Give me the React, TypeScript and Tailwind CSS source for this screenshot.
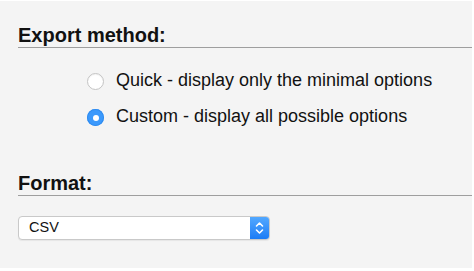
import React from "react";

const FONT = { fontFamily: '"Liberation Sans", Arial, Helvetica, sans-serif' };

function Radio({ checked }: { checked?: boolean }) {
  if (checked) {
    return (
      <span className="mt-[5px] flex h-[17px] w-[17px] shrink-0 items-center justify-center rounded-full bg-[#3b99fc] shadow-[inset_0_0_0_1px_#2f8cf0]">
        <span className="h-[6px] w-[6px] rounded-full bg-white" />
      </span>
    );
  }
  return (
    <span className="mt-[5px] h-[17px] w-[17px] shrink-0 rounded-full border border-[#c4c4c4] bg-white shadow-[inset_0_1px_1px_rgba(0,0,0,0.05)]" />
  );
}

export default function App() {
  return (
    <div className="h-[271px] w-[474px] bg-white pt-[1px] pb-[3px] pr-[2px]" style={FONT}>
      <div className="h-full w-full bg-[#f4f4f4] pl-[18px] pt-[22px] text-[#111]">
        {/* EXPORT METHOD */}
        <h2 className="border-b-[1.5px] border-[#9e9e9e] text-[20px] font-bold leading-[24px]">
          Export method:
        </h2>

        <div className="mt-[20px] flex flex-col gap-[12px] pl-[69px]">
          <label className="flex items-start gap-[12px] text-[18px] leading-[24px]">
            <Radio />
            Quick - display only the minimal options
          </label>
          <label className="flex items-start gap-[12px] text-[18px] leading-[24px]">
            <Radio checked />
            Custom - display all possible options
          </label>
        </div>

        {/* FORMAT */}
        <h2 className="mt-[43px] border-b-[1.5px] border-[#9e9e9e] text-[20px] font-bold leading-[24px]">
          Format:
        </h2>

        <div className="mt-[20px] flex h-[24px] w-[252px] overflow-hidden rounded-[4px] border border-[#c9c9c9] bg-white shadow-[0_1px_1px_rgba(0,0,0,0.06)]">
          <div className="flex flex-1 items-center pl-[10px] text-[14.5px]">CSV</div>
          <div className="flex w-[19px] items-center justify-center bg-gradient-to-b from-[#52a8ff] to-[#1a7cf5]">
            <svg width="9" height="14" viewBox="0 0 9 14" fill="none" stroke="white" strokeWidth="1.6" strokeLinecap="round" strokeLinejoin="round">
              <path d="M1.5 5 L4.5 2 L7.5 5" />
              <path d="M1.5 9 L4.5 12 L7.5 9" />
            </svg>
          </div>
        </div>
      </div>
    </div>
  );
}
